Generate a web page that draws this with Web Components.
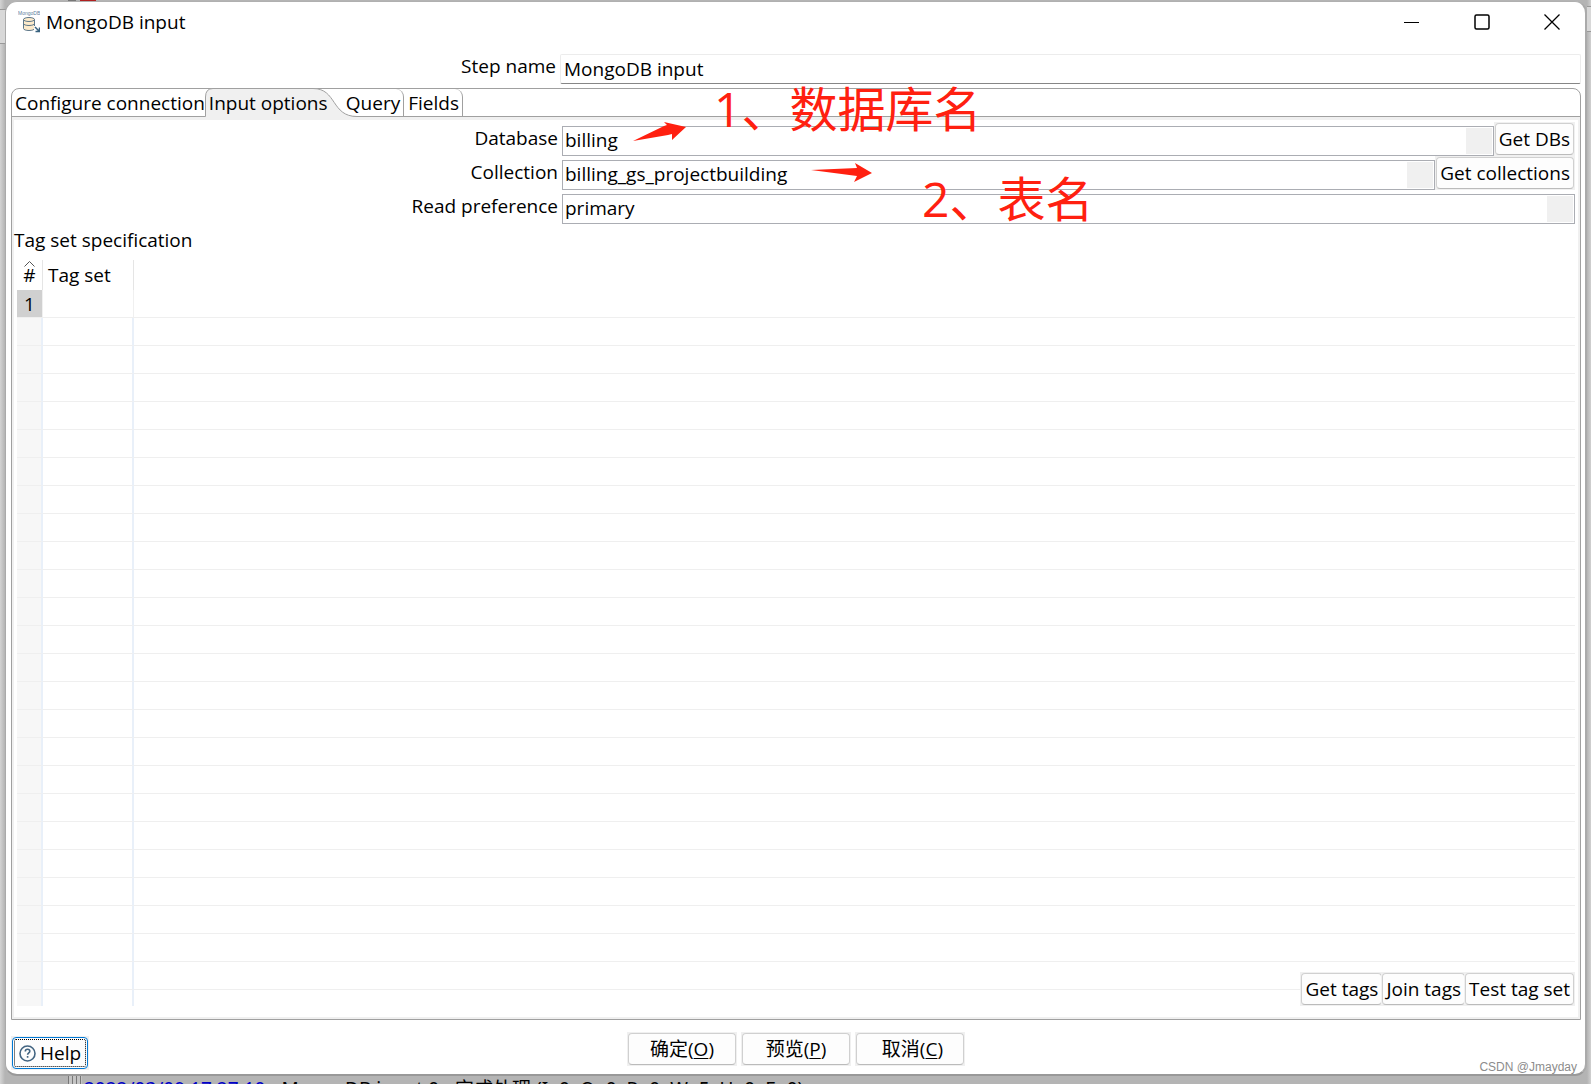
<!DOCTYPE html>
<html lang="en">
<head>
<meta charset="utf-8">
<title>MongoDB input</title>
<style>
html,body{height:100%;margin:0}
body{font:19px/26px "Open Sans","Noto Sans CJK SC",sans-serif;color:#000;background:#bebebe;overflow:hidden}
</style>
</head>
<body>
<desktop-backdrop>
  <dialog-window heading="MongoDB input">
    <step-name></step-name>
    <tab-folder>
      <option-form></option-form>
      <tag-table></tag-table>
    </tab-folder>
    <dialog-footer></dialog-footer>
  </dialog-window>
  <red-notes></red-notes>
</desktop-backdrop>
<script>
const base = `<style>
*,:host{box-sizing:border-box}
:host{display:block}
button,input,select{font:inherit;color:inherit;margin:0}
</style>`;
function define(name, html, setup) {
  customElements.define(name, class extends HTMLElement {
    constructor() {
      super();
      this.attachShadow({mode: 'open'}).innerHTML = base + html;
    }
    connectedCallback() { if (setup) setup(this, this.shadowRoot); }
  });
}

define('push-button', `<style>
:host{background:#f0f0f0;padding:1px;flex:none}
button{display:flex;align-items:center;justify-content:center;gap:4px;width:100%;height:32px;padding:0 3px;border:1px solid #d0d0d0;border-bottom-color:#bbb;border-radius:4px;background:#fdfdfd;white-space:nowrap}
:host([focused]) button{border:1px solid #0078d4;outline:1px dotted #000;outline-offset:-3px;padding:0 6px}
</style><button type="button"><slot></slot></button>`);

define('combo-box', `<style>
:host{flex:1;min-width:0}
.box{display:flex;height:30px;border:1px solid #abadb3;background:#fff}
select{flex:1;appearance:none;border:0;background:none;padding:0 2px 2px;outline:0}
i{width:26px;margin:1px;background:#f0f0f0;pointer-events:none}
</style><div class="box"><select></select><i></i></div>`, (el, root) => {
  const s = root.querySelector('select');
  s.setAttribute('aria-label', el.getAttribute('label'));
  s.replaceChildren(new Option(el.getAttribute('value')));
});

define('desktop-backdrop', `<style>
:host{position:relative;height:100vh;padding:1px 4px 8px 5px;background:linear-gradient(90deg,#d4d4d4,#b4b4b4 5px,#b4b4b4 calc(100% - 4px),#d0d0d0);overflow:hidden}
.log{position:absolute;left:84px;bottom:-18px;white-space:pre;font-family:"Noto Sans","Noto Sans CJK SC",sans-serif}
.log b{font-weight:400;color:#0000c8}
.sash{position:absolute;left:68px;bottom:0;width:14px;height:8px;background:repeating-linear-gradient(90deg,#777 0 1px,#c4c4c4 1px 4px)}
.top{position:absolute;left:68px;top:0;width:424px;height:1px;background:linear-gradient(90deg,#777 0 8px,transparent 8px 12px,#b02020 12px 28px,transparent 28px)}
.l1,.r1{position:absolute;top:9px;height:35px;width:6px;left:0;border:solid #999;border-width:1px 0;background:#d8d8d8}
.r1{left:auto;right:0;top:6px;height:26px;width:4px}
</style>
<div class="l1"></div><div class="r1"></div><div class="top"></div><div class="sash"></div>
<div class="log"><b>2022/03/09 17:27:10</b> - MongoDB input.0 - 完成处理 (I=0, O=0, R=0, W=5, U=0, E=0)</div>
<slot></slot>`);

define('dialog-window', `<style>
:host{position:relative;display:flex;flex-direction:column;height:100%;background:#fff;border:1px solid #999;border-width:1px 2px 2px 1px;border-color:#b0b0b0 #aaa #999 #aaa;border-radius:12px;padding:0 4px 0 5px}
header{display:flex;align-items:center;height:40px;padding-left:7px}
h1{flex:1;font:inherit;margin:0 0 0 6px}
header>svg{flex:none}
.win{display:flex;gap:54px;padding-right:21px}
.win button{width:16px;height:16px;padding:0;border:0;background:none;display:block}
.win svg{display:block}
</style>
<header>
<svg width="22" height="22" viewBox="0 0 22 22"><text x="0" y="4" font-family="Liberation Sans" font-size="5" fill="#5e7f9c" aria-hidden="true">MongoDB</text><path d="M5.500 8.500v9c0 1.200 2.500 2 5.500 2s5.500-.8 5.500-2v-9z" fill="#fdebcb" stroke="#5d7789"/><ellipse cx="11" cy="8.500" rx="5.500" ry="2" fill="#fdebcb" stroke="#5d7789"/><path d="M5.500 12.500c0 1.200 2.500 2 5.500 2s5.500-.8 5.500-2" fill="none" stroke="#5d7789"/><path d="M16 15h6v7h-6z" fill="#fff"/><path d="M17 16l4 4M21.500 16.500v4h-4" fill="none" stroke="#38627f" stroke-width="1.500"/></svg>
<h1></h1>
<div class="win">
<button type="button" aria-label="Minimize"><svg width="16" height="16"><path d="M0 8.500h15" stroke="#000"/></svg></button>
<button type="button" aria-label="Maximize"><svg width="16" height="16"><rect x="1" y="1" width="14" height="14" rx="1.500" fill="none" stroke="#000" stroke-width="1.500"/></svg></button>
<button type="button" aria-label="Close"><svg width="16" height="16"><path d="M.5.5l15 15M15.500.5l-15 15" stroke="#000" stroke-width="1.300"/></svg></button>
</div></header><slot></slot>`, (el, root) => {
  root.querySelector('h1').textContent = el.getAttribute('heading');
});

define('step-name', `<style>
:host{display:flex;padding-top:12px}
label{width:545px;line-height:24px;text-align:right}
input{flex:1;min-width:0;height:30px;margin-left:4px;padding:0 3px;border:1px solid #ececec;border-bottom-color:#868686;border-radius:2px;outline:0}
</style><label for="s">Step name</label><input id="s" value="MongoDB input">`);

define('tab-folder', `<style>
:host{display:flex;flex-direction:column;flex:1;min-height:0;margin-top:4px;border:1px solid #a0a0a0;border-radius:8px 8px 0 0}
nav{display:flex;height:28px;border-bottom:1px solid #a0a0a0}
button{position:relative;border:0;border-right:1px solid #a0a0a0;border-radius:0 8px 0 0;background:none;padding:0 3px;white-space:nowrap}
button:first-child{border-right:0;padding-right:0}
.sel{width:141px;height:28px;border:0;text-align:left;padding:0 4px}
.sel svg{position:absolute;left:0;top:-1px}
.sel span{position:relative}
.q{padding-left:0}
.f{padding-left:4px}
.page{flex:1;min-height:0;display:flex;flex-direction:column;border:2px solid #f0f0f0;border-top-width:3px;padding:2px 3px 11px 0}
</style>
<nav role="tablist"><button role="tab" type="button">Configure connection</button><button role="tab" type="button" class="sel" aria-selected="true"><svg width="152" height="29"><path d="M.5 29V9Q.5 .5 8 .5H108C132 .5 126 28.500 152 28.500V29z" fill="#f0f0f0"/><path d="M.5 28.500V9Q.5 .5 8 .5H108C132 .5 126 28.500 152 28.500" fill="none" stroke="#a0a0a0"/></svg><span>Input options</span></button><button role="tab" type="button" class="q">Query</button><button role="tab" type="button" class="f">Fields</button></nav>
<div class="page"><slot></slot></div>`);

define('option-form', `<style>
.row{display:flex;height:34px;align-items:flex-start}
.lab{width:544px;margin-right:4px;line-height:32px;text-align:right;flex:none}
combo-box{margin-top:4px}
</style>
<div class="row"><span class="lab">Database</span><combo-box label="Database" value="billing"></combo-box><push-button>Get DBs</push-button></div>
<div class="row"><span class="lab">Collection</span><combo-box label="Collection" value="billing_gs_projectbuilding"></combo-box><push-button>Get collections</push-button></div>
<div class="row"><span class="lab">Read preference</span><combo-box label="Read preference" value="primary"></combo-box></div>`);

define('tag-table', `<style>
:host{flex:1;min-height:0;display:flex;flex-direction:column;position:relative}
h2{font:inherit;margin:3px 0 0}
.wrap{flex:1;min-height:0;overflow:hidden;margin:7px 0 0 3px}
table{width:100%;border-collapse:separate;border-spacing:0;table-layout:fixed}
th{font-weight:400;height:30px;padding:0;text-align:left;border-right:1px solid #e5e5e5;position:relative}
th:last-child{border:0}
th:nth-child(2){padding-left:5px}
th svg{position:absolute;left:7px;top:1px}
.n{text-align:center}
td{height:28px;padding:0;border-bottom:1px solid #efefef;border-right:2px solid #e9f0f9}
td:first-child{background:#f7f7f7}
td:last-child{border-right:0}
tr.on td{border-right:1px solid #f0f0f0}
tr.on td:first-child{background:#d0d0d0}
tr.on td:last-child{border-right:0}
.acts{position:absolute;right:0;bottom:0;display:flex;background:#f0f0f0}
.acts push-button+push-button{margin-left:-2px}
</style><h2>Tag set specification</h2>
<div class="wrap"><table><colgroup><col style="width:26px"><col style="width:91px"><col></colgroup>
<thead><tr><th class="n"><svg width="11" height="6"><path d="M.5 5.500l5-5 5 5" fill="none" stroke="#555"/></svg>#</th><th>Tag set</th><th></th></tr></thead><tbody><tr class="on"><td class="n">1</td><td></td><td></td></tr></tbody></table></div>
<div class="acts"><push-button>Get tags</push-button><push-button>Join tags</push-button><push-button>Test tag set</push-button></div>`, (el, root) => {
  const body = root.querySelector('tbody');
  for (let i = body.rows.length; i < 40; i++) {
    const r = body.insertRow();
    r.insertCell(); r.insertCell(); r.insertCell();
  }
});

define('dialog-footer', `<style>
:host{display:grid;grid-template-columns:1fr auto 1fr;height:54px;align-items:start;padding-top:12px}
.help{justify-self:start;margin-top:4px}
.mid{display:flex;gap:4px}
.mid push-button{width:110px}
small{align-self:end;justify-self:end;font:12px/14px "Liberation Sans",sans-serif;color:#8c8c8c;padding-right:4px}
u{text-underline-offset:2px;text-decoration-thickness:1px}
</style>
<push-button class="help" focused><svg width="17" height="17" viewBox="0 0 17 17" fill="none" stroke="#426481" stroke-width="1.600"><circle cx="8.500" cy="8.500" r="7.500"/><path d="M6.300 6.500c0-3 4.500-2.800 4.500-.2 0 1.700-2.200 1.600-2.200 3.500M8.600 11v1.800"/></svg>Help</push-button>
<div class="mid"><push-button><span>确定(<u>O</u>)</span></push-button><push-button><span>预览(<u>P</u>)</span></push-button><push-button><span>&nbsp;取消(<u>C</u>)</span></push-button></div>
<small>CSDN @Jmayday</small>`);

define('red-notes', `<style>
:host{position:absolute;left:0;top:0;pointer-events:none;color:#ff2010;font:48px/60px "Open Sans","Noto Sans CJK SC",sans-serif;white-space:nowrap}
span,svg{position:absolute}
.a{left:714px;top:79px}.b{left:922px;top:169px}
svg{left:0;top:0}
</style><svg width="900" height="200" fill="#ff2010"><path d="M633 141l31-15 3-1-3-3 22 5-14 13 0-6-4 1z"/><path d="M811 170l46-2-2-5 17 10-18 9 3-6z"/></svg>
<span class="a">1、数据库名</span><span class="b">2、表名</span>`);
</script>
</body>
</html>
